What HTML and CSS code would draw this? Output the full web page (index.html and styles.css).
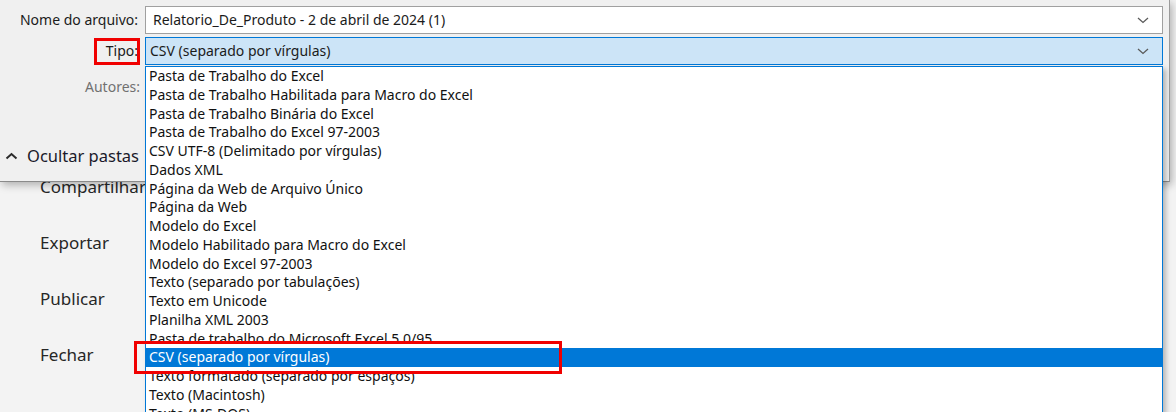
FILE: index.html
```html
<!DOCTYPE html>
<html lang="pt-BR">
<head>
<meta charset="utf-8">
<link rel="stylesheet" href="styles.css">
</head>
<body>
<nav class="backstage">
  <div class="nav-item first">Compartilhar</div>
  <div class="nav-item">Exportar</div>
  <div class="nav-item">Publicar</div>
  <div class="nav-item">Fechar</div>
</nav>

<div class="dialog">
  <div class="form">
    <div class="label">Nome do arquivo:</div>
    <div class="field">
      <span class="value">Relatorio_De_Produto - 2 de abril de 2024 (1)</span>
      <svg class="chev" width="12" height="7" viewBox="0 0 12 7"><path d="M1 1 L6 5.5 L11 1" fill="none" stroke="#5a5a5a" stroke-width="1.3"/></svg>
    </div>
    <div class="label">Tipo:</div>
    <div class="field active">
      <span class="value tight">CSV (separado por vírgulas)</span>
      <svg class="chev" width="12" height="7" viewBox="0 0 12 7"><path d="M1 1 L6 5.5 L11 1" fill="none" stroke="#5a5a5a" stroke-width="1.3"/></svg>
    </div>
    <div class="label muted">Autores:</div>
    <div></div>
  </div>
  <div class="toggle">
    <svg width="13" height="8" viewBox="0 0 13 8"><path d="M1.5 6.5 L6.5 2 L11.5 6.5" fill="none" stroke="#2b2b2b" stroke-width="2"/></svg>
    <span>Ocultar pastas</span>
  </div>
</div>

<ul class="list">
  <li>Pasta de Trabalho do Excel</li>
  <li>Pasta de Trabalho Habilitada para Macro do Excel</li>
  <li>Pasta de Trabalho Binária do Excel</li>
  <li>Pasta de Trabalho do Excel 97-2003</li>
  <li>CSV UTF-8 (Delimitado por vírgulas)</li>
  <li>Dados XML</li>
  <li>Página da Web de Arquivo Único</li>
  <li>Página da Web</li>
  <li>Modelo do Excel</li>
  <li>Modelo Habilitado para Macro do Excel</li>
  <li>Modelo do Excel 97-2003</li>
  <li>Texto (separado por tabulações)</li>
  <li>Texto em Unicode</li>
  <li>Planilha XML 2003</li>
  <li>Pasta de trabalho do Microsoft Excel 5.0/95</li>
  <li class="selected">CSV (separado por vírgulas)</li>
  <li>Texto formatado (separado por espaços)</li>
  <li>Texto (Macintosh)</li>
  <li>Texto (MS-DOS)</li>
</ul>

<div class="mark mark-tipo"></div>
<div class="mark mark-csv"></div>
</body>
</html>
```

FILE: styles.css
```css
* { box-sizing: border-box; }
html, body {
  margin: 0;
  padding: 0;
}
body {
  width: 1176px;
  height: 412px;
  overflow: hidden;
  position: relative;
  background: #f3f3f3;
  font-family: "Noto Sans", "Open Sans", sans-serif;
  color: #1b1b1b;
}

.backstage {
  padding-top: 174px;
  padding-left: 40px;
  display: flex;
  flex-direction: column;
}
.nav-item {
  height: 56px;
  font-size: 17px;
  line-height: 26px;
  color: #262626;
}

.dialog {
  position: absolute;
  left: 0;
  top: 0;
  width: 1170px;
  height: 182px;
  background: #f0f0f0;
  border-right: 1px solid #9a9a9a;
  border-bottom: 1px solid #8a8a8a;
  box-shadow: 2px 3px 8px rgba(0,0,0,0.28);
  padding-top: 6px;
}
.form {
  display: grid;
  grid-template-columns: 145px 1018px;
  grid-auto-rows: 28px;
  row-gap: 3px;
  font-size: 14px;
}
.label {
  text-align: right;
  padding-right: 7px;
  line-height: 28px;
  color: #1b1b1b;
}
.label.muted {
  color: #707070;
  padding-top: 5px;
  padding-right: 5px;
}
.field {
  background: #fff;
  border: 1px solid #a0a0a0;
  display: flex;
  align-items: center;
  justify-content: space-between;
  padding: 0 13px 0 7px;
}
.field.active {
  background: #cce4f7;
  border-color: #0078d7;
}
.value { line-height: 26px; }
.value.tight { margin-left: -3px; }
.chev { display: block; }

.toggle {
  margin-top: 48px;
  padding-left: 5px;
  display: flex;
  align-items: center;
  gap: 9px;
  font-size: 16.5px;
  color: #1a1a2a;
}
.toggle svg { display: block; }

.list {
  position: absolute;
  left: 145px;
  top: 66px;
  width: 1018px;
  height: 360px;
  margin: 0;
  padding: 0;
  list-style: none;
  background: #fff;
  border: 1px solid #0078d7;
  box-shadow: 3px 3px 5px rgba(0,0,0,0.25);
  font-size: 14px;
}
.list li {
  height: 18.75px;
  line-height: 18.75px;
  padding-left: 3px;
  white-space: nowrap;
  color: #111;
}
.list li.selected {
  background: #0078d7;
  color: #fff;
}

.mark {
  position: absolute;
  border: 3px solid #f00000;
}
.mark-tipo {
  left: 94px;
  top: 38px;
  width: 46px;
  height: 27px;
}
.mark-csv {
  left: 134px;
  top: 341px;
  width: 428px;
  height: 33px;
}
```
